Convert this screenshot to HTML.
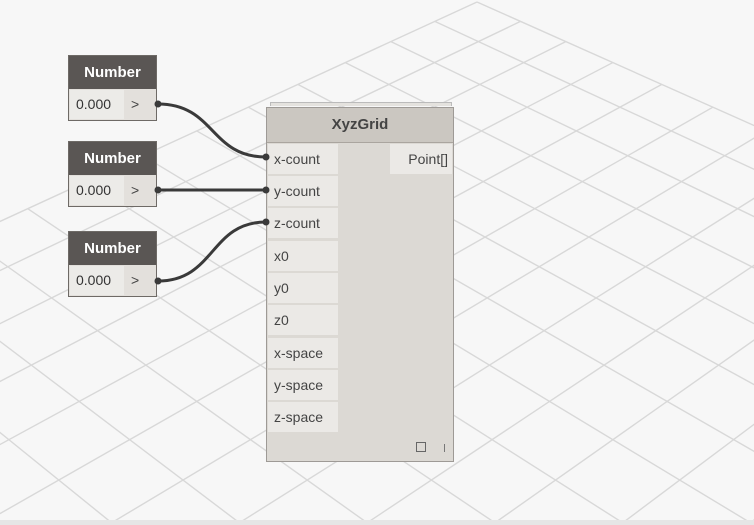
<!DOCTYPE html>
<html><head><meta charset="utf-8"><style>
html,body{margin:0;padding:0;width:754px;height:525px;overflow:hidden;background:#f7f7f7;font-family:"Liberation Sans",sans-serif;position:relative;}
svg{display:block}
#g{position:absolute;left:0;top:0}
.num{position:absolute;left:68px;width:87px;border:1px solid #6e6a66;background:#e3e0dc;}
.num .h{height:33px;background:#5a5654;color:#fff;font-weight:bold;font-size:15px;text-align:center;line-height:33px;}
.num .b{height:31px;position:relative;font-size:14px;color:#333;}
.num .v{position:absolute;left:1px;top:1px;width:54px;height:29px;background:#ecebe8;line-height:29px;padding-left:6px;box-sizing:border-box;}
.num .a{position:absolute;left:62px;top:0;line-height:31px;color:#444;}
.xyz{position:absolute;left:266px;top:107px;width:186px;height:353px;border:1px solid #9e9a96;background:#dcd9d4;}
.xyz .h{height:34px;background:#cbc7c1;border-bottom:1px solid #aaa59f;color:#444;font-weight:bold;font-size:15px;text-align:center;line-height:34px;}
.port{position:absolute;left:1px;width:70px;height:30px;background:#ebe9e6;font-size:14px;color:#444;line-height:30px;padding-left:6px;box-sizing:border-box;}
.out{position:absolute;left:123px;top:36px;width:62px;height:30px;background:#ebe9e6;font-size:14px;color:#444;line-height:30px;text-align:right;padding-right:4px;box-sizing:border-box;}
</style></head><body>
<svg id="g" width="754" height="525"></svg>
<div style="position:absolute;left:0;top:520px;width:754px;height:5px;background:#e6e6e6"></div>
<div style="position:absolute;left:270px;top:102px;width:180px;height:3px;border:1px solid #bbb;border-bottom:none;background:#e4e2de"></div>
<div class="num" style="top:55px"><div class="h">Number</div><div class="b"><div class="v">0.000</div><div class="a">&gt;</div></div></div>
<div class="num" style="top:141px"><div class="h">Number</div><div class="b"><div class="v">0.000</div><div class="a">&gt;</div></div></div>
<div class="num" style="top:231px"><div class="h">Number</div><div class="b"><div class="v">0.000</div><div class="a">&gt;</div></div></div>
<div class="xyz"><div class="h">XyzGrid</div>
<div class="port" style="top:36px">x-count</div>
<div class="port" style="top:68px">y-count</div>
<div class="port" style="top:100px">z-count</div>
<div class="port" style="top:133px">x0</div>
<div class="port" style="top:165px">y0</div>
<div class="port" style="top:197px">z0</div>
<div class="port" style="top:230px">x-space</div>
<div class="port" style="top:262px">y-space</div>
<div class="port" style="top:294px">z-space</div>
<div class="out">Point[]</div>
<div style="position:absolute;left:149px;top:334px;width:8px;height:8px;border:1px solid #666"></div>
<div style="position:absolute;left:177px;top:336px;width:1px;height:8px;background:#777"></div>
</div>
<svg width="754" height="525" style="position:absolute;left:0;top:0">
<g fill="none" stroke="#3a3a3a" stroke-width="3">
<path d="M158 104 C215 104 210 157 266 157"/>
<path d="M158 190 L266 190"/>
<path d="M158 281 C215 281 210 222 266 222"/>
</g>
<g fill="#3a3a3a">
<circle cx="158" cy="104" r="3.5"/><circle cx="158" cy="190" r="3.5"/><circle cx="158" cy="281" r="3.5"/>
<circle cx="266" cy="157" r="3.5"/><circle cx="266" cy="190" r="3.5"/><circle cx="266" cy="222" r="3.5"/>
</g>
</svg>
<script>
(function(){
var s=document.getElementById('g'),ns='http://www.w3.org/2000/svg';
var c=[477,2],VB=[-1770,-1000],VA=[2655,-1000],k=0.019,m=0.019;
function P(u,v){var d=1-k*u-m*v;return [(c[0]-k*u*VB[0]-m*v*VA[0])/d,(c[1]-k*u*VB[1]-m*v*VA[1])/d];}
function line(a,b){var l=document.createElementNS(ns,'line');l.setAttribute('x1',a[0]);l.setAttribute('y1',a[1]);l.setAttribute('x2',b[0]);l.setAttribute('y2',b[1]);l.setAttribute('stroke','#d8d8d8');l.setAttribute('stroke-width','1.4');s.appendChild(l);}
for(var i=0;i<60;i++){
 var vmax=(0.95-k*i)/m; if(vmax>0) line(P(i,0),P(i,vmax));
 var umax=(0.95-m*i)/k; if(umax>0) line(P(0,i),P(umax,i));
}
})();
</script>
</body></html>
